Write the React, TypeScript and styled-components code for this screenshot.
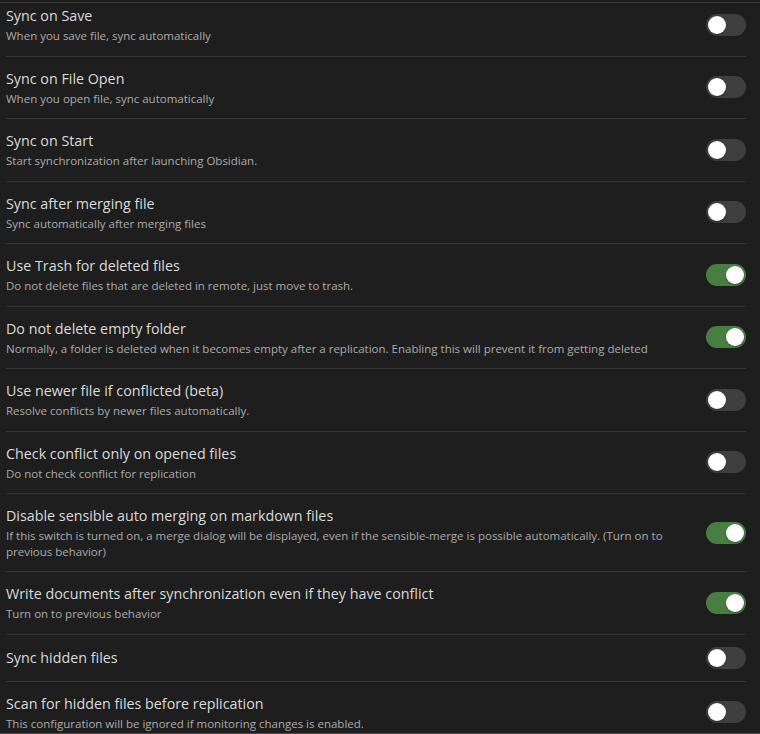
import React from "react";
import styled, { createGlobalStyle } from "styled-components";

const GlobalStyle = createGlobalStyle`
    html, body {
        margin: 0;
        padding: 0;
        background: #1e1e1e;
    }
    * {
        box-sizing: border-box;
    }
`;

const Viewport = styled.div`
    height: 734px;
    padding-top: 2px;
    background: #1e1e1e;
    display: flex;
    flex-direction: column;
    overflow: hidden;
    font-family: "Open Sans", "Noto Sans", sans-serif;
`;

const Pane = styled.div`
    flex: 1;
    min-height: 0;
    overflow: hidden;
    border-top: 1px solid #3a3a3a;
    border-bottom: 1px solid #4a4a4a;
    padding: 0 14px 0 6px;
`;

const Item = styled.div`
    display: flex;
    align-items: center;
    padding: 12px 0;
    border-top: 1px solid #363636;
    &:first-child {
        border-top: none;
        padding-top: 3px;
    }
`;

const Info = styled.div`
    flex: 1 1 auto;
    margin-right: 16px;
`;

const Name = styled.div`
    color: #dadada;
    font-size: 14.3px;
    line-height: 20px;
`;

const Description = styled.div`
    color: #ababab;
    font-size: 11.5px;
    line-height: 15.5px;
    padding-top: 2px;
`;

const Toggle = styled.div<{ $on: boolean }>`
    flex: 0 0 auto;
    position: relative;
    width: 40px;
    height: 22px;
    border-radius: 11px;
    background: ${(p) => (p.$on ? "#487e41" : "#3f3f3f")};
    &::after {
        content: "";
        position: absolute;
        top: 2px;
        left: ${(p) => (p.$on ? "20px" : "2px")};
        width: 18px;
        height: 18px;
        border-radius: 50%;
        background: #ffffff;
        box-shadow: 0 1px 2px rgba(0, 0, 0, 0.3);
    }
`;

const settings = [
    { name: "Sync on Save", desc: "When you save file, sync automatically", on: false },
    { name: "Sync on File Open", desc: "When you open file, sync automatically", on: false },
    { name: "Sync on Start", desc: "Start synchronization after launching Obsidian.", on: false },
    { name: "Sync after merging file", desc: "Sync automatically after merging files", on: false },
    { name: "Use Trash for deleted files", desc: "Do not delete files that are deleted in remote, just move to trash.", on: true },
    {
        name: "Do not delete empty folder",
        desc: "Normally, a folder is deleted when it becomes empty after a replication. Enabling this will prevent it from getting deleted",
        on: true,
    },
    { name: "Use newer file if conflicted (beta)", desc: "Resolve conflicts by newer files automatically.", on: false },
    { name: "Check conflict only on opened files", desc: "Do not check conflict for replication", on: false },
    {
        name: "Disable sensible auto merging on markdown files",
        desc: "If this switch is turned on, a merge dialog will be displayed, even if the sensible-merge is possible automatically. (Turn on to previous behavior)",
        on: true,
    },
    { name: "Write documents after synchronization even if they have conflict", desc: "Turn on to previous behavior", on: true },
    { name: "Sync hidden files", desc: "", on: false },
    {
        name: "Scan for hidden files before replication",
        desc: "This configuration will be ignored if monitoring changes is enabled.",
        on: false,
    },
];

const App = () => {
    return (
        <>
            <GlobalStyle />
            <Viewport>
                <Pane>
                    {settings.map((s) => (
                        <Item key={s.name}>
                            <Info>
                                <Name>{s.name}</Name>
                                {s.desc && <Description>{s.desc}</Description>}
                            </Info>
                            <Toggle $on={s.on} />
                        </Item>
                    ))}
                </Pane>
            </Viewport>
        </>
    );
};

export default App;
